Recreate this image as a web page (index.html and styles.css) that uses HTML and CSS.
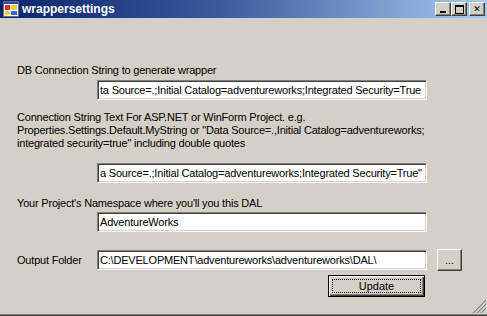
FILE: index.html
```html
<!DOCTYPE html>
<html lang="en">
<head>
    <meta charset="UTF-8">
    <meta name="viewport" content="width=device-width, initial-scale=1.0">
    <title>wrappersettings</title>
    <link rel="stylesheet" href="styles.css">
</head>
<body>
    <div class="window">
        <div class="titlebar">
            <svg class="app-icon" width="16" height="16" viewBox="0 0 16 16">
                <rect x="0.5" y="0.5" width="15" height="15" fill="#fff" stroke="#5a6e9c"/>
                <rect x="1" y="1" width="14" height="2" fill="#2a4ea0"/>
                <rect x="2" y="4" width="5" height="5" fill="#e03020"/>
                <rect x="8" y="4" width="6" height="5" fill="#f8d030"/>
                <rect x="2" y="10" width="5" height="4" fill="#f8d030"/>
                <rect x="8" y="10" width="6" height="4" fill="#3868c8"/>
            </svg>
            <span class="title">wrappersettings</span>
            <div class="caption-buttons">
                <button class="cap-btn"><span class="glyph-min"></span></button>
                <button class="cap-btn"><span class="glyph-max"></span></button>
                <button class="cap-btn close">&#x2715;</button>
            </div>
        </div>

        <div class="client">
            <div class="label first">DB Connection String to generate wrapper</div>
            <div class="textbox">ta Source=.;Initial Catalog=adventureworks;Integrated Security=True</div>

            <div class="label multi">Connection String Text For ASP.NET or WinForm Project. e.g.<br>Properties.Settings.Default.MyString or "Data Source=.,Initial Catalog=adventureworks;<br>integrated security=true" including double quotes</div>
            <div class="textbox tb2">a Source=.;Initial Catalog=adventureworks;Integrated Security=True"</div>

            <div class="label ns">Your Project's Namespace where you'll you this DAL</div>
            <div class="textbox tb3">AdventureWorks</div>

            <div class="folder-row">
                <span class="folder-label">Output Folder</span>
                <div class="textbox tb4">C:\DEVELOPMENT\adventureworks\adventureworks\DAL\</div>
                <button class="btn browse">...</button>
            </div>

            <div class="update-row">
                <button class="btn update"><span class="focus">Update</span></button>
            </div>

            <svg class="grip" width="14" height="14" viewBox="0 0 14 14">
                <path d="M13 1 L1 13 M13 5 L5 13 M13 9 L9 13" stroke="#fff" stroke-width="1"/>
                <path d="M14 1 L1 14 M14 5 L5 14 M14 9 L9 14" stroke="#808080" stroke-width="1.2"/>
            </svg>
        </div>
    </div>
</body>
</html>
```

FILE: styles.css
```css
body {
    margin: 0;
    width: 487px;
    height: 316px;
    overflow: hidden;
    background: #d4d0c8;
    font-family: "Liberation Sans", Arial, sans-serif;
    font-size: 11px;
    letter-spacing: -0.2px;
    color: #000;
}

.window {
    display: flex;
    flex-direction: column;
    height: 316px;
    border-bottom: 1px solid #404040;
    box-sizing: border-box;
}

.titlebar {
    display: flex;
    align-items: center;
    height: 18px;
    padding: 0 2px 0 3px;
    background: linear-gradient(to right, #0a246a, #3a5a9c 45%, #a6caf0);
}

.app-icon {
    flex: none;
}

.title {
    margin-left: 3px;
    color: #fff;
    font-family: "Liberation Sans", Arial, sans-serif;
    font-weight: bold;
    font-size: 12px;
    letter-spacing: 0;
}

.caption-buttons {
    display: flex;
    margin-left: auto;
}

.cap-btn {
    width: 16px;
    height: 14px;
    padding: 0;
    margin: 0;
    background: #d4d0c8;
    border: 1px solid;
    border-color: #fff #404040 #404040 #fff;
    box-shadow: inset -1px -1px 0 #808080;
    display: flex;
    align-items: center;
    justify-content: center;
    font-size: 9px;
    font-weight: bold;
    color: #000;
    font-family: "DejaVu Sans", sans-serif;
    line-height: 1;
}

.cap-btn.close {
    margin-left: 2px;
}

.glyph-min {
    display: block;
    width: 6px;
    height: 2px;
    background: #000;
    margin-top: 6px;
}

.glyph-max {
    display: block;
    width: 7px;
    height: 6px;
    border: 1px solid #000;
    border-top-width: 2px;
}

.client {
    flex: 1;
    display: flex;
    flex-direction: column;
    padding-left: 17px;
    position: relative;
    border-bottom: 1px solid #808080;
}

.label {
    line-height: 13px;
    white-space: nowrap;
}

.label.first {
    margin-top: 46px;
}

.label.multi {
    margin-top: 11px;
}

.label.ns {
    margin-top: 14px;
}

.textbox {
    width: 330px;
    height: 20px;
    box-sizing: border-box;
    margin-left: 80px;
    margin-top: 3px;
    padding: 0 0 0 2px;
    background: #fff;
    border: 1px solid;
    border-color: #808080 #fff #fff #808080;
    box-shadow: inset 1px 1px 0 #404040, inset -1px -1px 0 #d4d0c8;
    line-height: 18px;
    white-space: nowrap;
    overflow: hidden;
}

.textbox.tb2 {
    margin-top: 13px;
}

.textbox.tb3 {
    margin-top: 2px;
}

.folder-row {
    display: flex;
    align-items: center;
    margin-top: 17px;
}

.folder-label {
    width: 80px;
}

.folder-row .textbox {
    margin: 0;
}

.btn {
    font-family: "Liberation Sans", Arial, sans-serif;
    font-size: 11px;
    background: #d4d0c8;
    border: 1px solid;
    border-color: #fff #404040 #404040 #fff;
    box-shadow: inset -1px -1px 0 #808080;
    padding: 0;
    color: #000;
}

.browse {
    width: 25px;
    height: 22px;
    margin-left: 10px;
}

.update-row {
    display: flex;
    margin-top: 4px;
    padding-left: 311px;
}

.update {
    width: 97px;
    height: 22px;
    border: 1px solid #000;
    box-shadow: inset 1px 1px 0 #fff, inset -1px -1px 0 #404040, inset -2px -2px 0 #808080;
    display: flex;
    padding: 3px;
}

.update .focus {
    flex: 1;
    border: 1px dotted #000;
    display: flex;
    align-items: center;
    justify-content: center;
}

.grip {
    position: absolute;
    right: 1px;
    bottom: 1px;
}
```
